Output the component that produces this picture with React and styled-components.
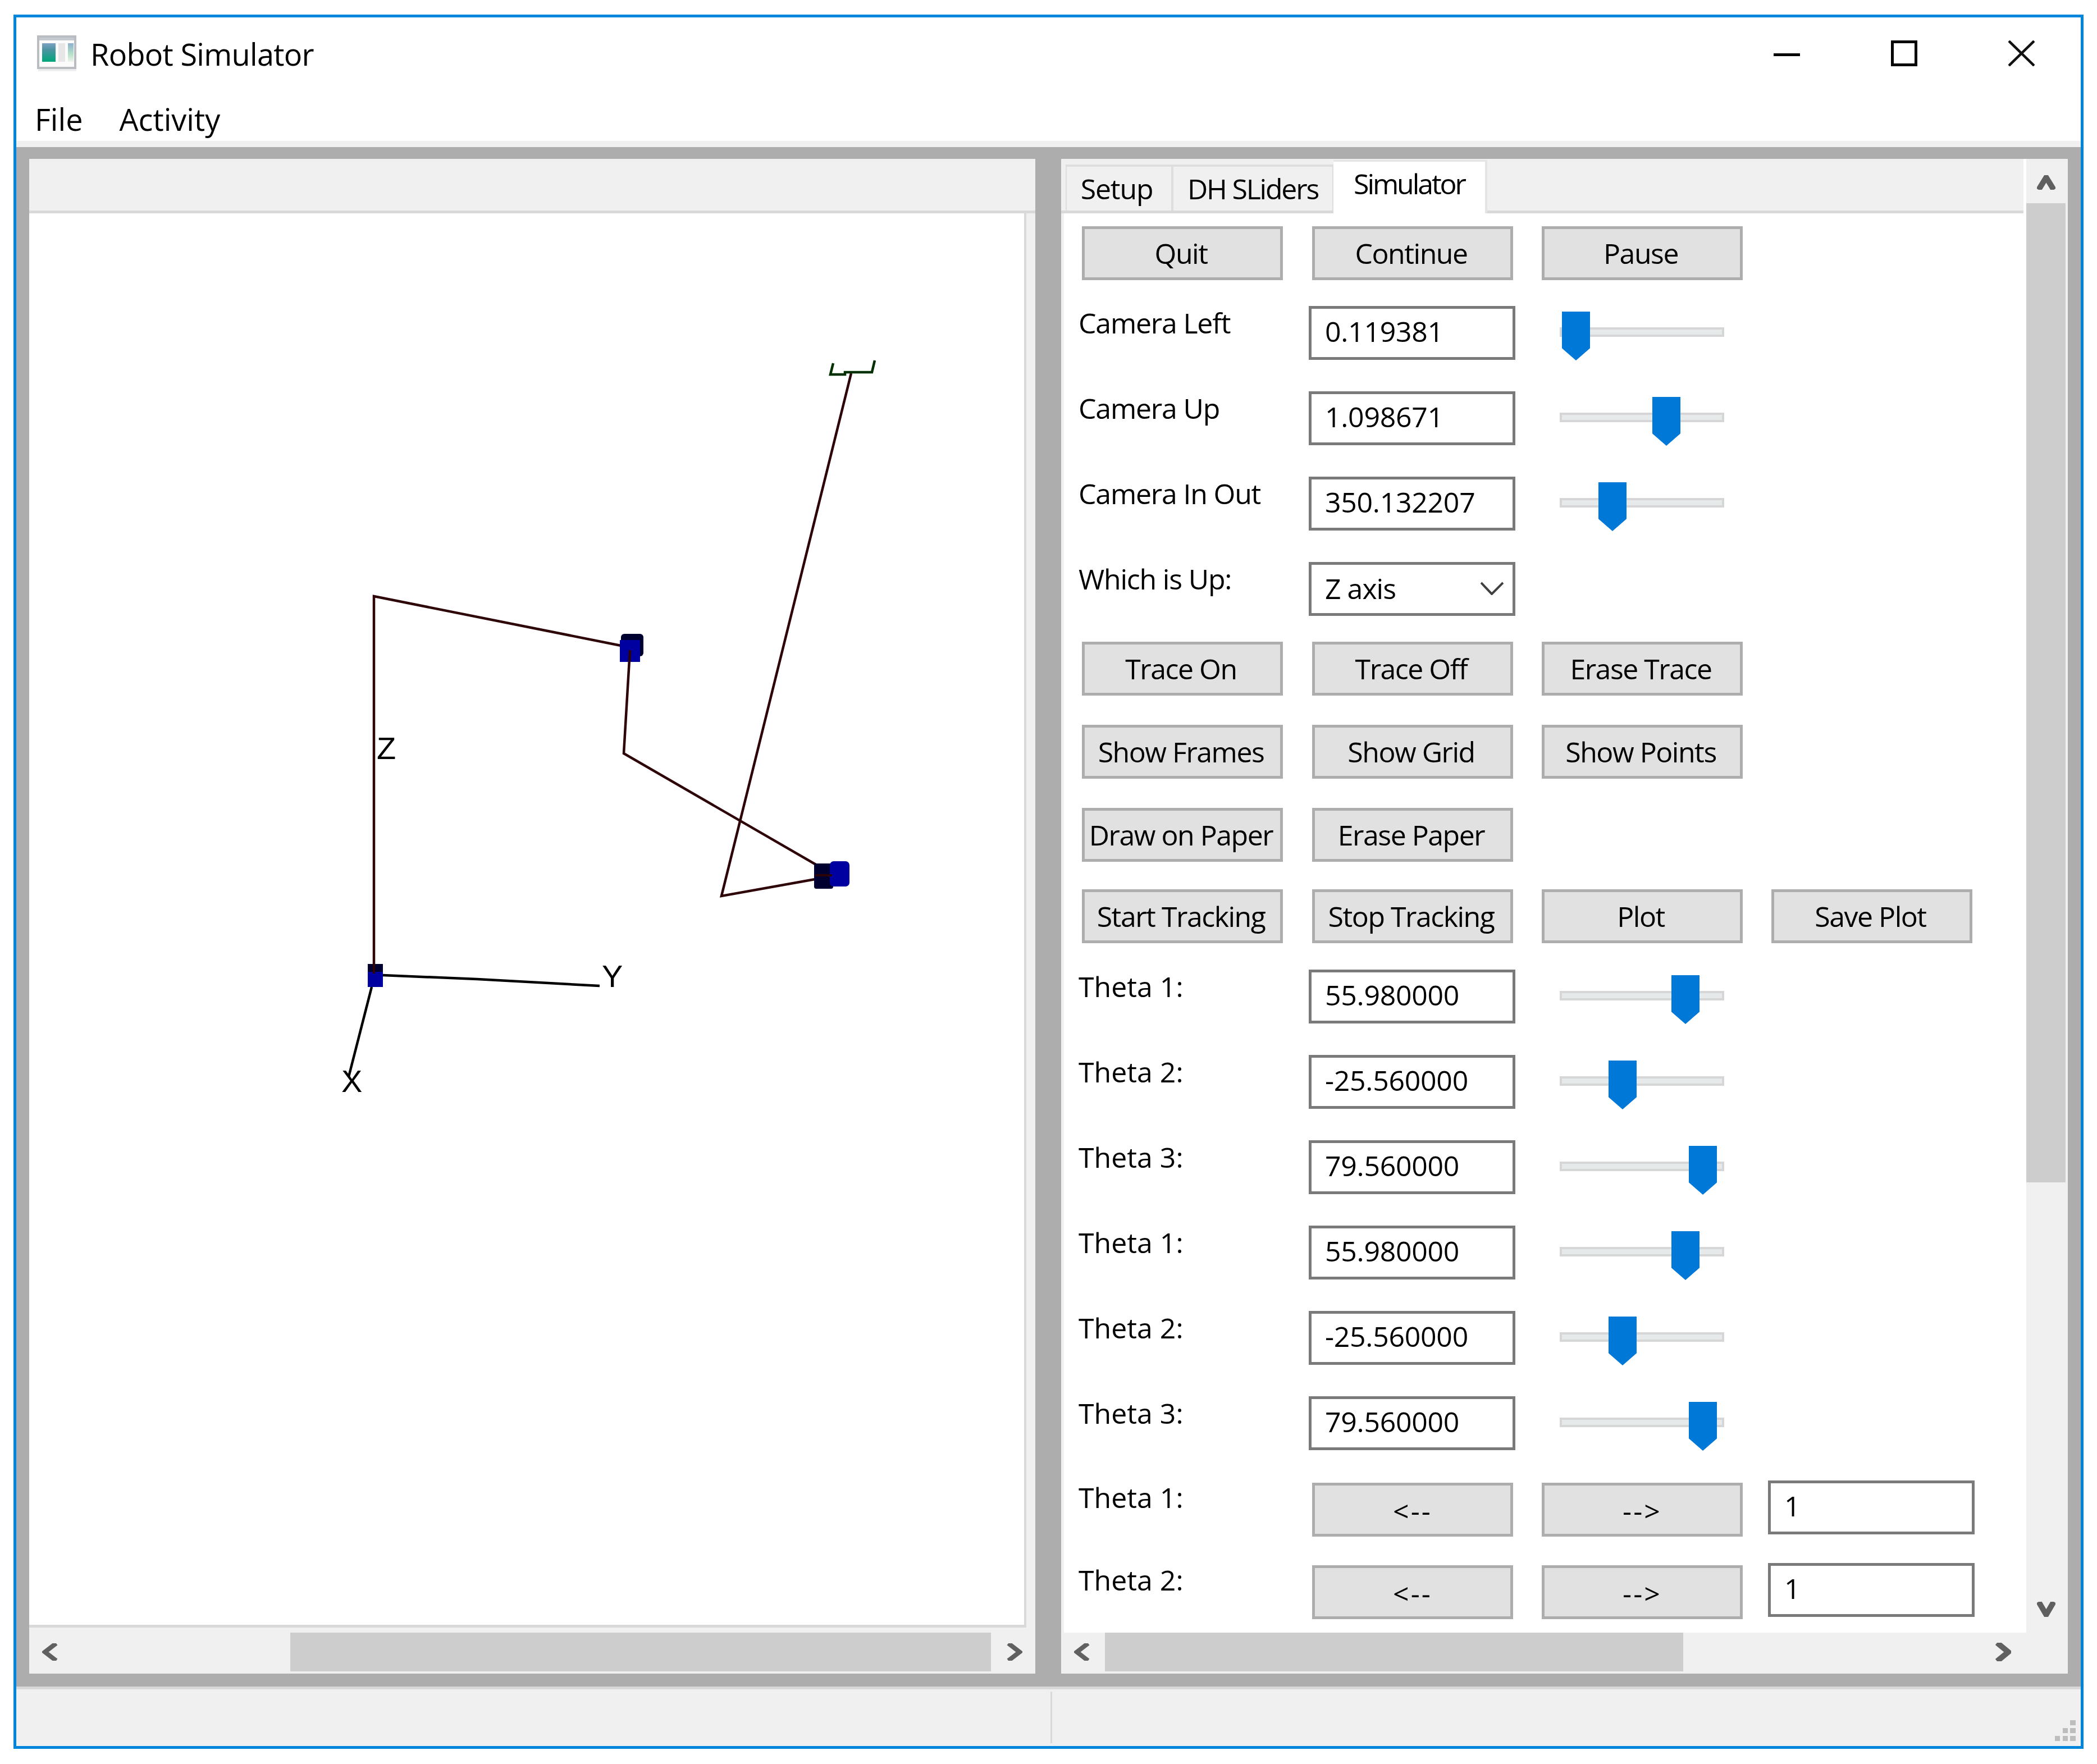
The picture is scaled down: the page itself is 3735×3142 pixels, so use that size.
import React from 'react'
import styled, { createGlobalStyle } from 'styled-components'

const GlobalStyle = createGlobalStyle`
  html, body {
    margin: 0;
    padding: 0;
    background: #fff;
  }
  * {
    box-sizing: border-box;
  }
`

const LINE = '#2e0308'

function Chevron({ dir, w, h, sw = 8 }) {
  const pts = {
    up: `3,${h} ${w / 2},4 ${w - 3},${h}`,
    down: `3,0 ${w / 2},${h - 4} ${w - 3},0`,
    left: `${w - 3},0 5,${h / 2} ${w - 3},${h}`,
    right: `3,0 ${w - 5},${h / 2} 3,${h}`,
  }[dir]
  return (
    <svg width={w} height={h} viewBox={`0 0 ${w} ${h}`}>
      <polyline points={pts} fill="none" stroke="#606060" strokeWidth={sw} />
    </svg>
  )
}

function AppIcon() {
  return (
    <svg width="71" height="64" viewBox="0 0 71 64">
      <defs>
        <linearGradient id="pane" x1="0" y1="0" x2="0" y2="1">
          <stop offset="0" stopColor="#7ba3c4" />
          <stop offset="0.35" stopColor="#4c93a2" />
          <stop offset="1" stopColor="#00a77a" />
        </linearGradient>
        <linearGradient id="pane2" x1="0" y1="0" x2="0" y2="1">
          <stop offset="0" stopColor="#8db1d0" />
          <stop offset="0.6" stopColor="#b7e2c8" />
          <stop offset="1" stopColor="#eef2ee" />
        </linearGradient>
      </defs>
      <rect x="0" y="0" width="70" height="60" fill="#fbfbfb" />
      <rect x="2" y="2" width="66" height="56" fill="none" stroke="#b9bdc2" strokeWidth="4" />
      <rect x="4" y="4" width="62" height="5" fill="#c5cad0" />
      <rect x="9" y="14" width="24" height="33" fill="url(#pane)" />
      <rect x="38" y="14" width="12" height="33" fill="#e6e6e6" />
      <rect x="55" y="14" width="10" height="33" fill="url(#pane2)" />
      <rect x="2" y="60" width="68" height="4" fill="#eeeeee" />
    </svg>
  )
}

function RobotDrawing() {
  return (
    <CanvasSvg viewBox="52 380 1772 2514">
      <g fill="none" stroke={LINE} strokeWidth="4.5">
        <polyline points="666,1734 666,1062 1106,1150" />
        <polyline points="1122,1158 1111,1342 1455,1541" />
        <polyline points="1452,1566 1285,1596 1516,665" />
      </g>
      <polyline points="1484,647 1479,667 1505,667 1505,663 1553,663 1558,642" fill="none" stroke="#003000" strokeWidth="4.5" />
      <g fill="none" stroke="#000" strokeWidth="4.5">
        <polyline points="682,1737 850,1744 1068,1756" />
        <line x1="662" y1="1758" x2="621" y2="1918" />
      </g>
      <rect x="655" y="1717" width="27" height="41" fill="#0000a0" />
      <rect x="655" y="1717" width="27" height="14" fill="#000030" />
      <line x1="666" y1="1717" x2="666" y2="1734" stroke={LINE} strokeWidth="4.5" />
      <rect x="1106" y="1129" width="40" height="40" rx="6" fill="#000030" />
      <rect x="1104" y="1140" width="36" height="39" fill="#0000a0" />
      <line x1="1122" y1="1158" x2="1121" y2="1179" stroke={LINE} strokeWidth="4.5" />
      <rect x="1450" y="1538" width="34" height="45" rx="4" fill="#000030" />
      <rect x="1478" y="1534" width="35" height="45" rx="7" fill="#0000a0" />
      <line x1="1452" y1="1559" x2="1482" y2="1559" stroke={LINE} strokeWidth="4" />
      <AxisLabel x="671" y="1352">Z</AxisLabel>
      <AxisLabel x="1072" y="1758">Y</AxisLabel>
      <AxisLabel x="608" y="1945">X</AxisLabel>
    </CanvasSvg>
  )
}

function Slider({ at }) {
  return (
    <SliderCell>
      <SliderTrack />
      <SliderHandle style={{ left: at }} />
    </SliderCell>
  )
}

function ValueRow({ top, label, value, at, theta }) {
  return (
    <Row $top={top}>
      {theta ? <ThetaLabel>{label}</ThetaLabel> : <FieldLabel>{label}</FieldLabel>}
      <ValueBox>{value}</ValueBox>
      <Slider at={at} />
    </Row>
  )
}

function ButtonRow({ top, labels }) {
  return (
    <Row $top={top}>
      {labels.map((l) => (
        <PanelButton key={l}>{l}</PanelButton>
      ))}
    </Row>
  )
}

function StepRow({ top, label }) {
  return (
    <Row $top={top}>
      <ThetaLabel>{label}</ThetaLabel>
      <StepButton>{'<--'}</StepButton>
      <StepButton>{'-->'}</StepButton>
      <ValueBox>1</ValueBox>
    </Row>
  )
}

export default function App() {
  return (
    <Page>
      <GlobalStyle />
      <Win>
        <TitleBar>
          <IconSlot><AppIcon /></IconSlot>
          <TitleText>Robot Simulator</TitleText>
          <Captions>
            <Caption>
              <svg width="47" height="46" viewBox="0 0 47 46"><rect x="0" y="23" width="47" height="5" fill="#000" /></svg>
            </Caption>
            <Caption>
              <svg width="47" height="46" viewBox="0 0 47 46"><rect x="2.5" y="2.5" width="42" height="41" fill="none" stroke="#000" strokeWidth="5" /></svg>
            </Caption>
            <Caption>
              <svg width="47" height="46" viewBox="0 0 47 46"><path d="M1 1 L46 45 M46 1 L1 45" fill="none" stroke="#111" strokeWidth="4.5" /></svg>
            </Caption>
          </Captions>
        </TitleBar>
        <MenuBar>
          <MenuItem>File</MenuItem>
          <MenuItem>Activity</MenuItem>
        </MenuBar>
        <Workspace>
          <LeftPanel>
            <PanelHeader />
            <CanvasFrame>
              <RobotDrawing />
            </CanvasFrame>
            <HScroll>
              <ArrowCell><Chevron dir="left" w={28} h={31} /></ArrowCell>
              <HThumb $ml={391} $w={1248} />
              <ArrowCell $end><Chevron dir="right" w={28} h={31} /></ArrowCell>
            </HScroll>
          </LeftPanel>
          <RightPanel>
            <MainColumn>
              <TabHeader>
                <Tab $w={190} $ls={-1.2} $pr={8}>Setup</Tab>
                <Tab $w={287} $ls={-2.2}>DH SLiders</Tab>
                <ActiveTab>Simulator</ActiveTab>
              </TabHeader>
              <Form>
                <ButtonRow top={0} labels={['Quit', 'Continue', 'Pause']} />
                <ValueRow top={46} label="Camera Left" value="0.119381" at={4} />
                <ValueRow top={56} label="Camera Up" value="1.098671" at={165} />
                <ValueRow top={56} label="Camera In Out" value="350.132207" at={69} />
                <Row $top={56}>
                  <FieldLabel>Which is Up:</FieldLabel>
                  <SelectBox>
                    Z axis
                    <svg width="41" height="24" viewBox="0 0 41 24"><polyline points="1,2 20,22 40,2" fill="none" stroke="#404040" strokeWidth="4" /></svg>
                  </SelectBox>
                </Row>
                <ButtonRow top={46} labels={['Trace On', 'Trace Off', 'Erase Trace']} />
                <ButtonRow top={52} labels={['Show Frames', 'Show Grid', 'Show Points']} />
                <ButtonRow top={52} labels={['Draw on Paper', 'Erase Paper']} />
                <ButtonRow top={49} labels={['Start Tracking', 'Stop Tracking', 'Plot', 'Save Plot']} />
                <ValueRow theta top={47} label="Theta 1:" value="55.980000" at={199} />
                <ValueRow theta top={56} label="Theta 2:" value="-25.560000" at={87} />
                <ValueRow theta top={56} label="Theta 3:" value="79.560000" at={230} />
                <ValueRow theta top={56} label="Theta 1:" value="55.980000" at={199} />
                <ValueRow theta top={56} label="Theta 2:" value="-25.560000" at={87} />
                <ValueRow theta top={56} label="Theta 3:" value="79.560000" at={230} />
                <StepRow top={54} label="Theta 1:" />
                <StepRow top={51} label="Theta 2:" />
              </Form>
              <HScroll>
                <ArrowCell><Chevron dir="left" w={28} h={31} /></ArrowCell>
                <HThumb $ml={4} $w={1030} />
                <ArrowCell $end $mr={4}><Chevron dir="right" w={28} h={33} sw={10} /></ArrowCell>
              </HScroll>
            </MainColumn>
            <VScroll>
              <VArrowTop><Chevron dir="up" w={33} h={26} sw={10} /></VArrowTop>
              <VThumb />
              <VArrowBottom><Chevron dir="down" w={33} h={27} sw={10} /></VArrowBottom>
            </VScroll>
          </RightPanel>
        </Workspace>
        <StatusBar>
          <StatusDivider />
          <Grip viewBox="0 0 37 37" width="37" height="37">
            <rect x="27" y="0" width="10" height="9" />
            <rect x="14" y="14" width="9" height="9" />
            <rect x="27" y="14" width="10" height="9" />
            <rect x="0" y="28" width="9" height="9" />
            <rect x="14" y="28" width="9" height="9" />
            <rect x="27" y="28" width="10" height="9" />
          </Grip>
        </StatusBar>
      </Win>
    </Page>
  )
}

const Page = styled.div`
  padding: 26px 24px;
  width: 3735px;
  height: 3142px;
  font-family: "Open Sans", "Noto Sans", sans-serif;
  color: #000;
`

const Win = styled.div`
  width: 3687px;
  height: 3089px;
  border: 5px solid #0085dd;
  display: flex;
  flex-direction: column;
  background: #fff;
`

const TitleBar = styled.div`
  height: 120px;
  flex: none;
  display: flex;
  align-items: flex-start;
  padding-left: 37px;
`

const IconSlot = styled.div`
  margin-top: 32px;
  height: 64px;
`

const TitleText = styled.div`
  margin: 35px 0 0 24px;
  font-size: 54px;
  line-height: 60px;
  letter-spacing: -0.7px;
`

const Captions = styled.div`
  margin-left: auto;
  margin-top: 41px;
  padding-right: 1px;
  display: flex;
`

const Caption = styled.div`
  width: 209px;
  height: 46px;
  display: flex;
  justify-content: center;
`

const MenuBar = styled.div`
  height: 100px;
  flex: none;
  padding: 31px 0 0 33px;
  display: flex;
  gap: 65px;
`

const MenuItem = styled.div`
  font-size: 54px;
  line-height: 60px;
`

const Workspace = styled.div`
  height: 2753px;
  flex: none;
  border-top: 11px solid #f0f0f0;
  padding: 21px 23px 23px;
  background: #adadad;
  display: flex;
  gap: 46px;
`

const LeftPanel = styled.div`
  width: 1793px;
  background: #f0f0f0;
  display: flex;
  flex-direction: column;
`

const PanelHeader = styled.div`
  height: 97px;
  flex: none;
  border-bottom: 5px solid #d9d9d9;
`

const CanvasFrame = styled.div`
  width: 1776px;
  height: 2519px;
  flex: none;
  background: #fff;
  border-right: 4px solid #d9d9d9;
  border-bottom: 5px solid #d9d9d9;
`

const CanvasSvg = styled.svg`
  display: block;
  width: 1772px;
  height: 2514px;
`

const AxisLabel = styled.text`
  font-family: "Liberation Sans", sans-serif;
  font-size: 56px;
  fill: #000;
`

const HScroll = styled.div`
  height: 73px;
  flex: none;
  margin-top: auto;
  display: flex;
  background: #f0f0f0;
`

const ArrowCell = styled.div`
  width: 74px;
  height: 69px;
  display: flex;
  align-items: center;
  justify-content: center;
  margin-left: ${({ $end }) => ($end ? 'auto' : '0')};
  margin-right: ${({ $mr }) => $mr || 0}px;
`

const HThumb = styled.div`
  height: 69px;
  width: ${({ $w }) => $w}px;
  margin-left: ${({ $ml }) => $ml}px;
  background: #cdcdcd;
`

const RightPanel = styled.div`
  width: 1793px;
  display: flex;
`

const MainColumn = styled.div`
  width: 1719px;
  background: #fff;
  display: flex;
  flex-direction: column;
`

const TabHeader = styled.div`
  height: 97px;
  flex: none;
  margin-right: 5px;
  padding-left: 8px;
  background: #f0f0f0;
  border-bottom: 5px solid #d9d9d9;
  display: flex;
  align-items: flex-end;
`

const Tab = styled.div`
  width: ${({ $w }) => $w}px;
  height: 82px;
  padding-top: 9px;
  padding-right: ${({ $pr }) => $pr || 0}px;
  border: 4px solid #dedede;
  border-right-width: 2px;
  border-bottom: none;
  border-left-width: 2px;
  font-size: 50px;
  line-height: 60px;
  letter-spacing: ${({ $ls }) => $ls}px;
  text-align: center;
`

const ActiveTab = styled.div`
  width: 274px;
  height: 95px;
  margin-bottom: -5px;
  padding-top: 9px;
  background: #fff;
  border-top: 3px solid #e4e4e4;
  border-right: 4px solid #e4e4e4;
  font-size: 50px;
  line-height: 60px;
  letter-spacing: -3.1px;
  text-align: center;
`

const Form = styled.div`
  flex: 1;
  overflow: hidden;
  padding: 23px 0 0 26px;
  border-left: 5px solid #f0f0f0;
`

const Row = styled.div`
  display: grid;
  grid-template-columns: 410px 409px 409px 380px;
  align-items: start;
  height: 96px;
  margin-top: ${({ $top }) => $top}px;
`

const FieldLabel = styled.div`
  font-size: 50px;
  line-height: 60px;
  letter-spacing: -1.2px;
  white-space: nowrap;
`

const ThetaLabel = styled(FieldLabel)`
  letter-spacing: 0;
`

const PanelButton = styled.div`
  width: 358px;
  height: 96px;
  margin-left: 6px;
  padding-right: 5px;
  background: #e1e1e1;
  border: 5px solid #adadad;
  display: flex;
  align-items: center;
  justify-content: center;
  font-size: 50px;
  letter-spacing: -1.5px;
  white-space: nowrap;
`

const StepButton = styled(PanelButton)`
  margin-top: 4px;
  padding: 3px 0 0 0;
  letter-spacing: 3px;
`

const ValueBox = styled.div`
  width: 368px;
  height: 96px;
  padding: 0 0 6px 24px;
  background: #fff;
  border: 5px solid #7a7a7a;
  display: flex;
  align-items: center;
  font-size: 50px;
  letter-spacing: -0.3px;
`

const SelectBox = styled(ValueBox)`
  justify-content: space-between;
  padding-right: 16px;
  padding-bottom: 2px;
  letter-spacing: -1px;
`

const SliderCell = styled.div`
  position: relative;
  width: 293px;
  height: 96px;
  margin-left: 38px;
  padding-top: 38px;
`

const SliderTrack = styled.div`
  height: 17px;
  background: #e7eaea;
  border: 4px solid #d6d6d6;
`

const SliderHandle = styled.div`
  position: absolute;
  top: 10px;
  width: 50px;
  height: 87px;
  background: #0078d7;
  clip-path: polygon(0 0, 100% 0, 100% 75%, 50% 100%, 0 75%);
`

const VScroll = styled.div`
  width: 74px;
  background: #f0f0f0;
  display: flex;
  flex-direction: column;
`

const VArrowTop = styled.div`
  width: 70px;
  height: 79px;
  flex: none;
  padding-top: 29px;
  display: flex;
  justify-content: center;
`

const VThumb = styled.div`
  width: 70px;
  height: 1744px;
  flex: none;
  background: #cdcdcd;
`

const VArrowBottom = styled.div`
  width: 70px;
  margin-top: auto;
  padding-bottom: 101px;
  display: flex;
  justify-content: center;
`

const StatusBar = styled.div`
  flex: 1;
  background: #f0f0f0;
  border-top: 5px solid #d8d8d8;
  padding: 4px 9px 5px 1842px;
  display: flex;
  justify-content: space-between;
`

const StatusDivider = styled.div`
  width: 3px;
  height: 92px;
  background: #d9d9d9;
`

const Grip = styled.svg`
  align-self: flex-end;
  margin-bottom: 4px;
  fill: #bdbdbd;
`
